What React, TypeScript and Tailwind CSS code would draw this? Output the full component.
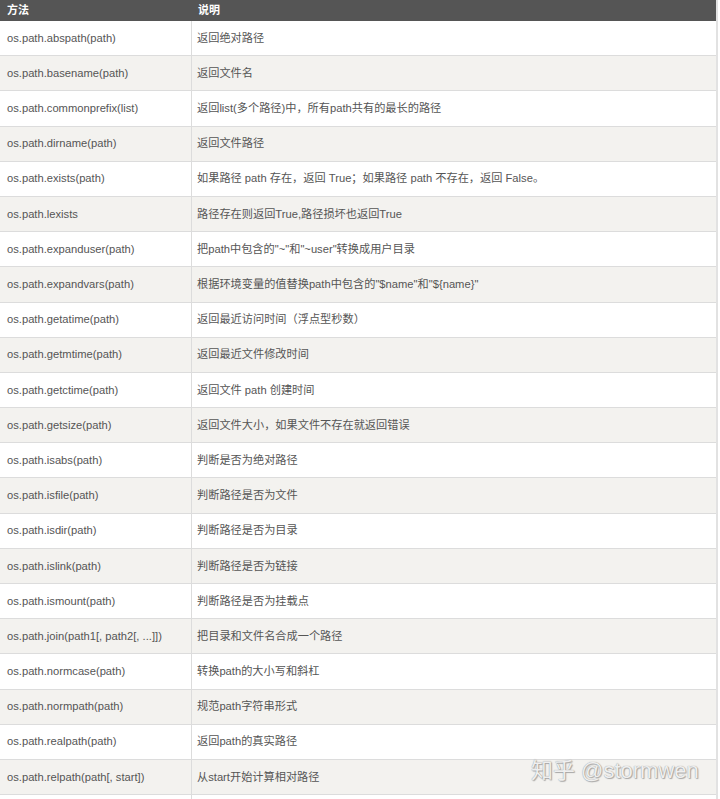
import React from "react";

type Row = { method: string; desc: string };

const rows: Row[] = [
  { method: "os.path.abspath(path)", desc: "返回绝对路径" },
  { method: "os.path.basename(path)", desc: "返回文件名" },
  { method: "os.path.commonprefix(list)", desc: "返回list(多个路径)中，所有path共有的最长的路径" },
  { method: "os.path.dirname(path)", desc: "返回文件路径" },
  { method: "os.path.exists(path)", desc: "如果路径 path 存在，返回 True；如果路径 path 不存在，返回 False。" },
  { method: "os.path.lexists", desc: "路径存在则返回True,路径损坏也返回True" },
  { method: "os.path.expanduser(path)", desc: "把path中包含的\"~\"和\"~user\"转换成用户目录" },
  { method: "os.path.expandvars(path)", desc: "根据环境变量的值替换path中包含的\"$name\"和\"${name}\"" },
  { method: "os.path.getatime(path)", desc: "返回最近访问时间（浮点型秒数）" },
  { method: "os.path.getmtime(path)", desc: "返回最近文件修改时间" },
  { method: "os.path.getctime(path)", desc: "返回文件 path 创建时间" },
  { method: "os.path.getsize(path)", desc: "返回文件大小，如果文件不存在就返回错误" },
  { method: "os.path.isabs(path)", desc: "判断是否为绝对路径" },
  { method: "os.path.isfile(path)", desc: "判断路径是否为文件" },
  { method: "os.path.isdir(path)", desc: "判断路径是否为目录" },
  { method: "os.path.islink(path)", desc: "判断路径是否为链接" },
  { method: "os.path.ismount(path)", desc: "判断路径是否为挂载点" },
  { method: "os.path.join(path1[, path2[, ...]])", desc: "把目录和文件名合成一个路径" },
  { method: "os.path.normcase(path)", desc: "转换path的大小写和斜杠" },
  { method: "os.path.normpath(path)", desc: "规范path字符串形式" },
  { method: "os.path.realpath(path)", desc: "返回path的真实路径" },
  { method: "os.path.relpath(path[, start])", desc: "从start开始计算相对路径" },
];

export default function App() {
  return (
    <div
      className="relative w-[720px] h-[799px] overflow-hidden bg-white"
      style={{ fontFamily: '"Liberation Sans", "Noto Sans CJK SC", sans-serif' }}
    >
      <div className="w-[718px] border-r-2 border-[#e2e2e2]">
        {/* header */}
        <div className="grid grid-cols-[192px_1fr] h-[21px] bg-[#555555] text-white text-[11px] font-bold">
          <div className="flex items-center pl-[7px]">方法</div>
          <div className="flex items-center pl-[6px]">说明</div>
        </div>

        {rows.map((row, i) => (
          <div
            key={row.method}
            className={
              "grid grid-cols-[192px_1fr] h-[35.2px] border-b border-[#dcdcdc] text-[11.2px] text-[#555555] " +
              (i % 2 === 0 ? "bg-white" : "bg-[#f3f2ef]")
            }
          >
            <div className="flex items-center pl-[7px] border-r border-[#dcdcdc] whitespace-nowrap">
              {row.method}
            </div>
            <div className="flex items-center pl-[5px] whitespace-nowrap">{row.desc}</div>
          </div>
        ))}
        {/* next row, cut off by the window */}
        <div className="grid grid-cols-[192px_1fr] h-[35.2px] bg-white">
          <div className="border-r border-[#dcdcdc]" />
          <div />
        </div>
      </div>

      {/* watermark */}
      <div className="absolute left-[531px] top-[756px] text-[22px] leading-[30px] text-[#efefef] whitespace-nowrap [text-shadow:0_0_1px_#888,1px_1px_1px_#aaa]">
        知乎 @stormwen
      </div>
    </div>
  );
}
